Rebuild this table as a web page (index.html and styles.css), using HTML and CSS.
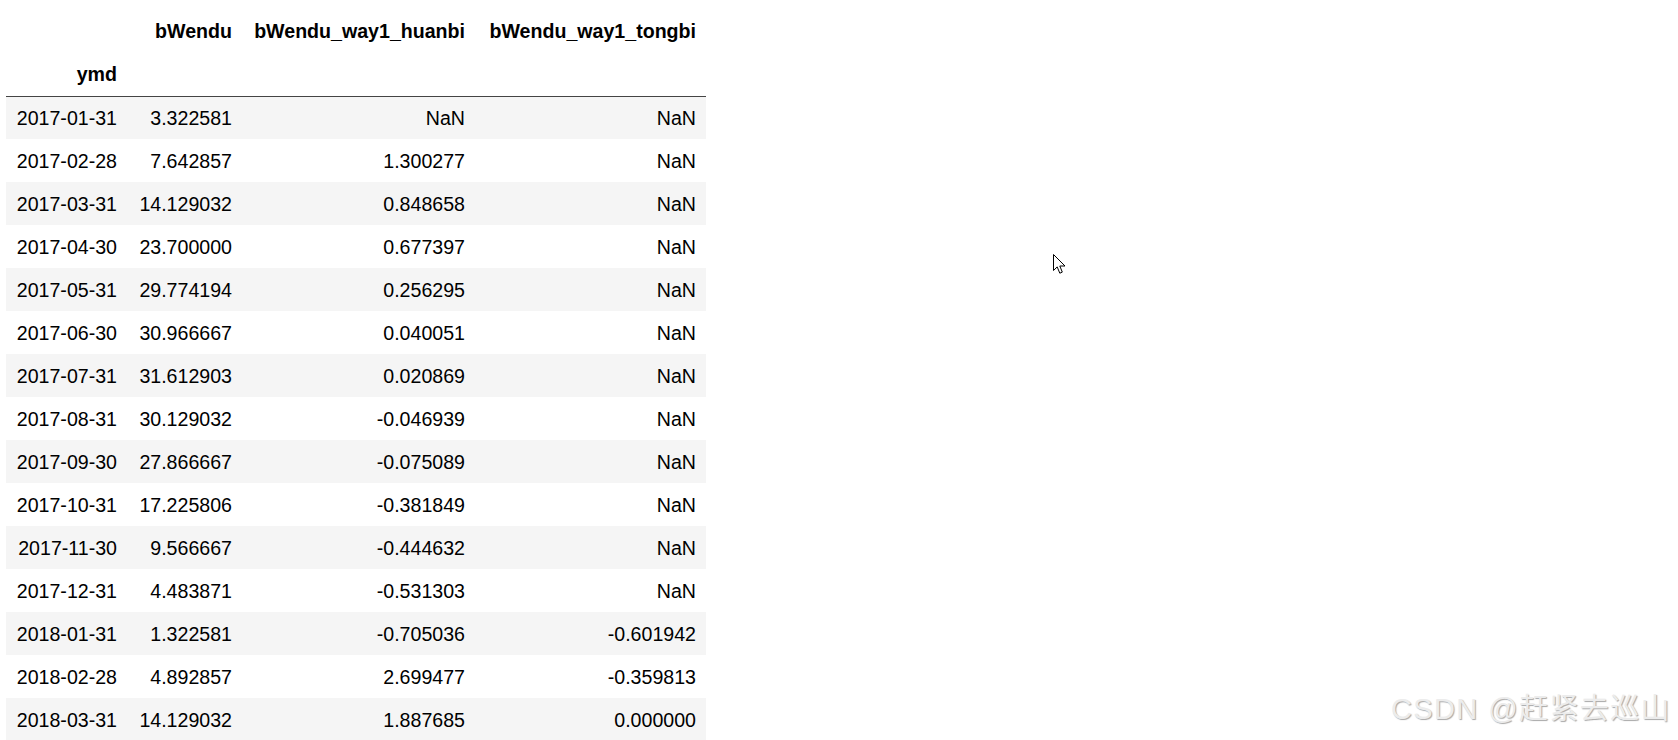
FILE: index.html
```html
<!DOCTYPE html>
<html>
<head>
<meta charset="utf-8">
<link rel="stylesheet" href="styles.css">
</head>
<body>
<div class="page">
  <table class="df">
    <colgroup>
      <col class="c-idx"><col class="c-a"><col class="c-b"><col class="c-c">
    </colgroup>
    <thead>
      <tr class="hrow"><th></th><th>bWendu</th><th>bWendu_way1_huanbi</th><th>bWendu_way1_tongbi</th></tr>
      <tr class="hrow idxname"><th>ymd</th><th></th><th></th><th></th></tr>
    </thead>
    <tbody>
      <tr><th>2017-01-31</th><td>3.322581</td><td>NaN</td><td>NaN</td></tr>
      <tr><th>2017-02-28</th><td>7.642857</td><td>1.300277</td><td>NaN</td></tr>
      <tr><th>2017-03-31</th><td>14.129032</td><td>0.848658</td><td>NaN</td></tr>
      <tr><th>2017-04-30</th><td>23.700000</td><td>0.677397</td><td>NaN</td></tr>
      <tr><th>2017-05-31</th><td>29.774194</td><td>0.256295</td><td>NaN</td></tr>
      <tr><th>2017-06-30</th><td>30.966667</td><td>0.040051</td><td>NaN</td></tr>
      <tr><th>2017-07-31</th><td>31.612903</td><td>0.020869</td><td>NaN</td></tr>
      <tr><th>2017-08-31</th><td>30.129032</td><td>-0.046939</td><td>NaN</td></tr>
      <tr><th>2017-09-30</th><td>27.866667</td><td>-0.075089</td><td>NaN</td></tr>
      <tr><th>2017-10-31</th><td>17.225806</td><td>-0.381849</td><td>NaN</td></tr>
      <tr><th>2017-11-30</th><td>9.566667</td><td>-0.444632</td><td>NaN</td></tr>
      <tr><th>2017-12-31</th><td>4.483871</td><td>-0.531303</td><td>NaN</td></tr>
      <tr><th>2018-01-31</th><td>1.322581</td><td>-0.705036</td><td>-0.601942</td></tr>
      <tr><th>2018-02-28</th><td>4.892857</td><td>2.699477</td><td>-0.359813</td></tr>
      <tr><th>2018-03-31</th><td>14.129032</td><td>1.887685</td><td>0.000000</td></tr>
    </tbody>
  </table>
</div>
<svg class="cursor" width="14" height="21" viewBox="0 0 14 21">
  <path d="M0.5 0.5 L0.5 16.5 L4.2 12.9 L6.8 19.2 L9.3 18.1 L6.8 12 L12 12 Z" fill="#fff" stroke="#000" stroke-width="1" stroke-linejoin="miter"/>
</svg>
<div class="watermark">CSDN @赶紧去巡山</div>
</body>
</html>
```
FILE: styles.css
```css
html, body {
  margin: 0;
  padding: 0;
  background: #fff;
}
body {
  width: 1678px;
  height: 740px;
  overflow: hidden;
  position: relative;
  font-family: "Liberation Sans", Arial, sans-serif;
  color: #000;
}
.page {
  padding: 9px 0 0 6px;
}
.df {
  border-collapse: collapse;
  table-layout: fixed;
  width: 700px;
  font-size: 19.6px;
}
.c-idx { width: 121px; }
.c-a { width: 115px; }
.c-b { width: 233px; }
.c-c { width: 231px; }
.df th, .df td {
  padding: 0 10px;
  text-align: right;
  vertical-align: middle;
  white-space: nowrap;
  line-height: 22px;
}
.df td { font-weight: normal; }
.df thead th { font-weight: bold; }
.df tbody th { font-weight: normal; }
.df thead tr.hrow { height: 43px; }
.df thead tr.idxname { height: 44px; }
.df thead tr.idxname th { border-bottom: 1px solid #444; }
.df tbody tr { height: 43px; }
.df tbody tr:nth-child(odd) { background: #f5f5f5; }
.cursor {
  position: absolute;
  left: 1053px;
  top: 254px;
}
.watermark {
  position: absolute;
  right: 7px;
  top: 685px;
  font-family: "Liberation Sans", "Noto Sans CJK SC", sans-serif;
  font-size: 29px;
  letter-spacing: 1.4px;
  color: #ececec;
  text-shadow: 1px 1px 1px #a8a8a8;
  white-space: nowrap;
}
```
